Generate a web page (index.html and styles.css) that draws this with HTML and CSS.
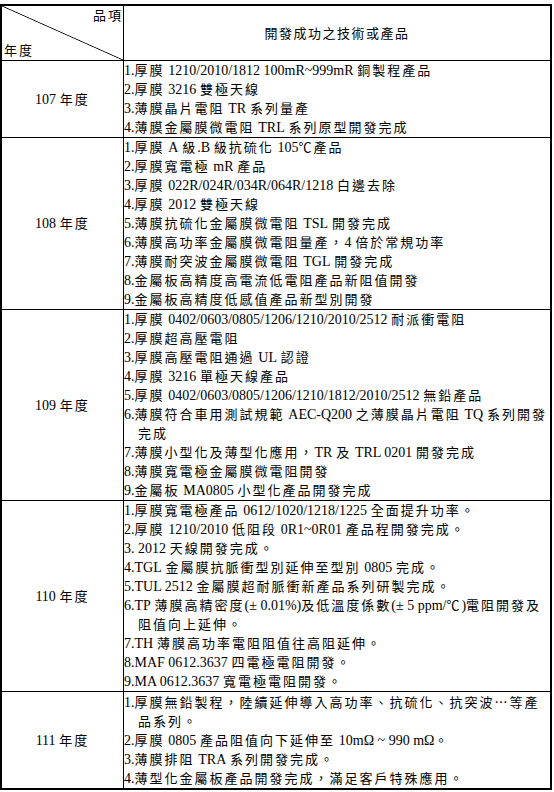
FILE: index.html
```html
<!DOCTYPE html>
<html lang="zh-Hant">
<head>
<meta charset="utf-8">
<title>開發成功之技術或產品</title>
<link rel="stylesheet" href="styles.css">
</head>
<body>
<table class="tech">
  <colgroup><col class="c1"><col class="c2"></colgroup>
  <thead>
    <tr class="head">
      <th class="corner">
        <div class="corner-in">
          <span class="item">品項</span>
          <span class="yr">年度</span>
        </div>
      </th>
      <th class="title">開發成功之技術或產品</th>
    </tr>
  </thead>
  <tbody>
    <tr>
      <td class="year"><span class="en">107</span> 年度</td>
      <td class="list">
        <div class="ln"><span class="en">1.</span>厚膜 <span class="en">1210/2010/1812 100mR~999mR</span> 銅製程產品</div>
        <div class="ln"><span class="en">2.</span>厚膜 <span class="en">3216</span> 雙極天線</div>
        <div class="ln"><span class="en">3.</span>薄膜晶片電阻 <span class="en">TR</span> 系列量產</div>
        <div class="ln"><span class="en">4.</span>薄膜金屬膜微電阻 <span class="en">TRL</span> 系列原型開發完成</div>
      </td>
    </tr>
    <tr>
      <td class="year"><span class="en">108</span> 年度</td>
      <td class="list">
        <div class="ln"><span class="en">1.</span>厚膜 <span class="en">A</span> 級<span class="en">.B</span> 級抗硫化 <span class="en">105</span>℃產品</div>
        <div class="ln"><span class="en">2.</span>厚膜寬電極 <span class="en">mR</span> 產品</div>
        <div class="ln"><span class="en">3.</span>厚膜 <span class="en">022R/024R/034R/064R/1218</span> 白邊去除</div>
        <div class="ln"><span class="en">4.</span>厚膜 <span class="en">2012</span> 雙極天線</div>
        <div class="ln"><span class="en">5.</span>薄膜抗硫化金屬膜微電阻 <span class="en">TSL</span> 開發完成</div>
        <div class="ln"><span class="en">6.</span>薄膜高功率金屬膜微電阻量產，<span class="en">4</span> 倍於常規功率</div>
        <div class="ln"><span class="en">7.</span>薄膜耐突波金屬膜微電阻 <span class="en">TGL</span> 開發完成</div>
        <div class="ln"><span class="en">8.</span>金屬板高精度高電流低電阻產品新阻值開發</div>
        <div class="ln"><span class="en">9.</span>金屬板高精度低感值產品新型別開發</div>
      </td>
    </tr>
    <tr>
      <td class="year"><span class="en">109</span> 年度</td>
      <td class="list">
        <div class="ln"><span class="en">1.</span>厚膜 <span class="en">0402/0603/0805/1206/1210/2010/2512</span> 耐派衝電阻</div>
        <div class="ln"><span class="en">2.</span>厚膜超高壓電阻</div>
        <div class="ln"><span class="en">3.</span>厚膜高壓電阻通過 <span class="en">UL</span> 認證</div>
        <div class="ln"><span class="en">4.</span>厚膜 <span class="en">3216</span> 單極天線產品</div>
        <div class="ln"><span class="en">5.</span>厚膜 <span class="en">0402/0603/0805/1206/1210/1812/2010/2512</span> 無鉛產品</div>
        <div class="ln"><span class="en">6.</span>薄膜符合車用測試規範 <span class="en">AEC-Q200</span> 之薄膜晶片電阻 <span class="en">TQ</span> 系列開發</div>
        <div class="ln cont">完成</div>
        <div class="ln"><span class="en">7.</span>薄膜小型化及薄型化應用，<span class="en">TR</span> 及 <span class="en">TRL 0201</span> 開發完成</div>
        <div class="ln"><span class="en">8.</span>薄膜寬電極金屬膜微電阻開發</div>
        <div class="ln"><span class="en">9.</span>金屬板 <span class="en">MA0805</span> 小型化產品開發完成</div>
      </td>
    </tr>
    <tr>
      <td class="year"><span class="en">110</span> 年度</td>
      <td class="list">
        <div class="ln"><span class="en">1.</span>厚膜寬電極產品 <span class="en">0612/1020/1218/1225</span> 全面提升功率。</div>
        <div class="ln"><span class="en">2.</span>厚膜 <span class="en">1210/2010</span> 低阻段 <span class="en">0R1~0R01</span> 產品程開發完成。</div>
        <div class="ln"><span class="en">3. 2012</span> 天線開發完成。</div>
        <div class="ln"><span class="en">4.TGL</span> 金屬膜抗脈衝型別延伸至型別 <span class="en">0805</span> 完成。</div>
        <div class="ln"><span class="en">5.TUL 2512</span> 金屬膜超耐脈衝新產品系列研製完成。</div>
        <div class="ln"><span class="en">6.TP</span> 薄膜高精密度<span class="en">(± 0.01%)</span>及低溫度係數<span class="en">(± 5 ppm/</span>℃<span class="en">)</span>電阻開發及</div>
        <div class="ln cont">阻值向上延伸。</div>
        <div class="ln"><span class="en">7.TH</span> 薄膜高功率電阻阻值往高阻延伸。</div>
        <div class="ln"><span class="en">8.MAF 0612.3637</span> 四電極電阻開發。</div>
        <div class="ln"><span class="en">9.MA 0612.3637</span> 寬電極電阻開發。</div>
      </td>
    </tr>
    <tr class="last">
      <td class="year"><span class="en">111</span> 年度</td>
      <td class="list">
        <div class="ln"><span class="en">1.</span>厚膜無鉛製程，陸續延伸導入高功率、抗硫化、抗突波<span class="cjk">⋯</span>等產</div>
        <div class="ln cont">品系列。</div>
        <div class="ln"><span class="en">2.</span>厚膜 <span class="en">0805</span> 產品阻值向下延伸至 <span class="en">10mΩ ~ 990 mΩ</span>。</div>
        <div class="ln"><span class="en">3.</span>薄膜排阻 <span class="en">TRA</span> 系列開發完成。</div>
        <div class="ln"><span class="en">4.</span>薄型化金屬板產品開發完成，滿足客戶特殊應用。</div>
      </td>
    </tr>
  </tbody>
</table>
</body>
</html>
```

FILE: styles.css
```css
html, body {
  margin: 0;
  padding: 0;
  background: #fff;
}

body {
  padding-top: 4px;
  color: #000;
  font-family: "Liberation Serif", "Noto Sans CJK TC", serif;
  font-size: 13px;
  line-height: 19px;
  letter-spacing: 2px;
  word-spacing: -1.5px;
}

.tech {
  box-sizing: border-box;
  width: 552px;
  border: 2px solid #000;
  border-spacing: 0;
  table-layout: fixed;
}

.c1 { width: 122px; }

.tech th,
.tech td {
  padding: 0;
  font-weight: normal;
  border-bottom: 1px solid #000;
  vertical-align: middle;
}

.tech tr.last td { border-bottom: none; }

.corner,
.year {
  border-right: 1px solid #000;
  box-sizing: border-box;
}

.head th { height: 54px; }

.corner {
  background: linear-gradient(to top right, transparent calc(50% - 0.8px), #000 50%, transparent calc(50% + 0.8px));
}

.corner-in {
  height: 54px;
  display: flex;
  flex-direction: column;
  justify-content: space-between;
  padding: 0 0 0 2px;
}

.item { align-self: flex-end; }
.yr { align-self: flex-start; }

.title {
  text-align: center;
  padding-left: 2px;
  letter-spacing: 1.5px;
}

.year {
  text-align: center;
  padding-left: 2px;
}

.list {
  text-align: left;
  padding-left: 4px;
}

.ln { white-space: nowrap; }

.cont { padding-left: 14px; }

.cjk { font-family: "Noto Sans CJK TC", sans-serif; }

.en {
  font-size: 14px;
  letter-spacing: 0;
  word-spacing: 0;
  line-height: 1;
}
```
